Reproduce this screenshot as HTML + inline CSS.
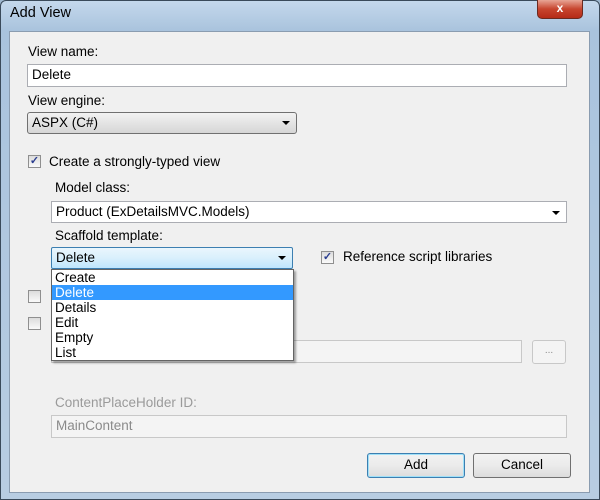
<!DOCTYPE html>
<html><head><style>
*{margin:0;padding:0;box-sizing:border-box}
body{width:600px;height:500px;overflow:hidden;font-family:"Liberation Sans",sans-serif;font-size:13.5px;color:#000;background:#9fb8d0;position:relative}
.a{position:absolute}
#frame{left:0;top:0;width:600px;height:500px;background:linear-gradient(#c4d8ec,#a9c3dd 30px,#b8cde2);border:1px solid #3a4a5a;border-radius:6px 6px 0 0}
#panel{left:9px;top:31px;width:581px;height:462px;background:#f0f0f0;border:1px solid #8a9cb0}
.box{background:#fff;border:1px solid #abadb3;padding:2px 4px;line-height:16px}
.sel{background:linear-gradient(#f2f2f2,#e4e4e4 50%,#d6d6d6);border:1px solid #707070;border-radius:3px;padding:2px 4px;line-height:16px}
.arr{position:absolute;right:6px;top:8px;width:0;height:0;border-left:4px solid transparent;border-right:4px solid transparent;border-top:4px solid #000}
.cb{width:13px;height:13px;border:1px solid #8f8f8f;background:linear-gradient(#dcdcdc,#fafafa)}
.ck{color:#2a3d8f;font-size:11px;line-height:11px;text-align:center;font-weight:bold}
.dis{background:#f4f4f4;border:1px solid #c8c8c8;color:#8a8a8a;padding:2px 4px;line-height:16px}
.btn{border:1px solid #707070;border-radius:3px;background:linear-gradient(#f2f2f2,#ebebeb 50%,#dcdcdc);text-align:center;line-height:22px;font-size:13.5px}
</style></head><body>
<div id="frame" class="a"></div>
<div class="a" style="left:10px;top:5px;font-size:14.5px">Add View</div>
<div class="a" style="left:537px;top:0;width:46px;height:19px;background:linear-gradient(#e8a595,#c7452e 50%,#b52b17);border:1px solid #6b2a20;border-top:none;border-radius:0 0 5px 5px;color:#fff;font-weight:bold;text-align:center;line-height:17px;font-size:12px">x</div>
<div id="panel" class="a"></div>

<div class="a" style="left:28px;top:44px">View name:</div>
<div class="a box" style="left:27px;top:64px;width:540px;height:23px">Delete</div>
<div class="a" style="left:28px;top:93px">View engine:</div>
<div class="a sel" style="left:27px;top:112px;width:270px;height:22px">ASPX (C#)<div class="arr"></div></div>

<div class="a cb ck" style="left:28px;top:155px">✓</div>
<div class="a" style="left:49px;top:154px">Create a strongly-typed view</div>
<div class="a" style="left:55px;top:180px">Model class:</div>
<div class="a box" style="left:51px;top:201px;width:516px;height:22px">Product (ExDetailsMVC.Models)<div class="arr" style="top:9px"></div></div>
<div class="a" style="left:55px;top:228px">Scaffold template:</div>
<div class="a sel" style="left:51px;top:247px;width:242px;height:22px;border-color:#3c7fb1;background:linear-gradient(#eaf6fd,#d9f0fc 50%,#bee6fd);border-radius:2px">Delete<div class="arr"></div></div>
<div class="a cb ck" style="left:321px;top:251px">✓</div>
<div class="a" style="left:343px;top:249px">Reference script libraries</div>

<div class="a cb" style="left:28px;top:290px"></div>
<div class="a cb" style="left:28px;top:317px"></div>
<div class="a dis" style="left:51px;top:340px;width:471px;height:23px"></div>
<div class="a dis" style="left:532px;top:340px;width:34px;height:24px;border-radius:3px;text-align:center;font-size:10px">...</div>

<div class="a" style="left:51px;top:269px;width:243px;height:92px;background:#fff;border:1px solid #646464;box-shadow:2px 2px 2px rgba(0,0,0,.35);font-size:13.5px;line-height:15px">
<div style="padding-left:3px">Create</div>
<div style="padding-left:3px;background:#3399ff;color:#fff">Delete</div>
<div style="padding-left:3px">Details</div>
<div style="padding-left:3px">Edit</div>
<div style="padding-left:3px">Empty</div>
<div style="padding-left:3px">List</div>
</div>

<div class="a" style="left:55px;top:395px;color:#9a9a9a">ContentPlaceHolder ID:</div>
<div class="a dis" style="left:51px;top:415px;width:516px;height:23px">MainContent</div>

<div class="a btn" style="left:367px;top:453px;width:98px;height:25px;border-color:#3c7fb1;box-shadow:inset 0 0 0 1px #9fe0f8">Add</div>
<div class="a btn" style="left:473px;top:453px;width:98px;height:25px">Cancel</div>
</body></html>
